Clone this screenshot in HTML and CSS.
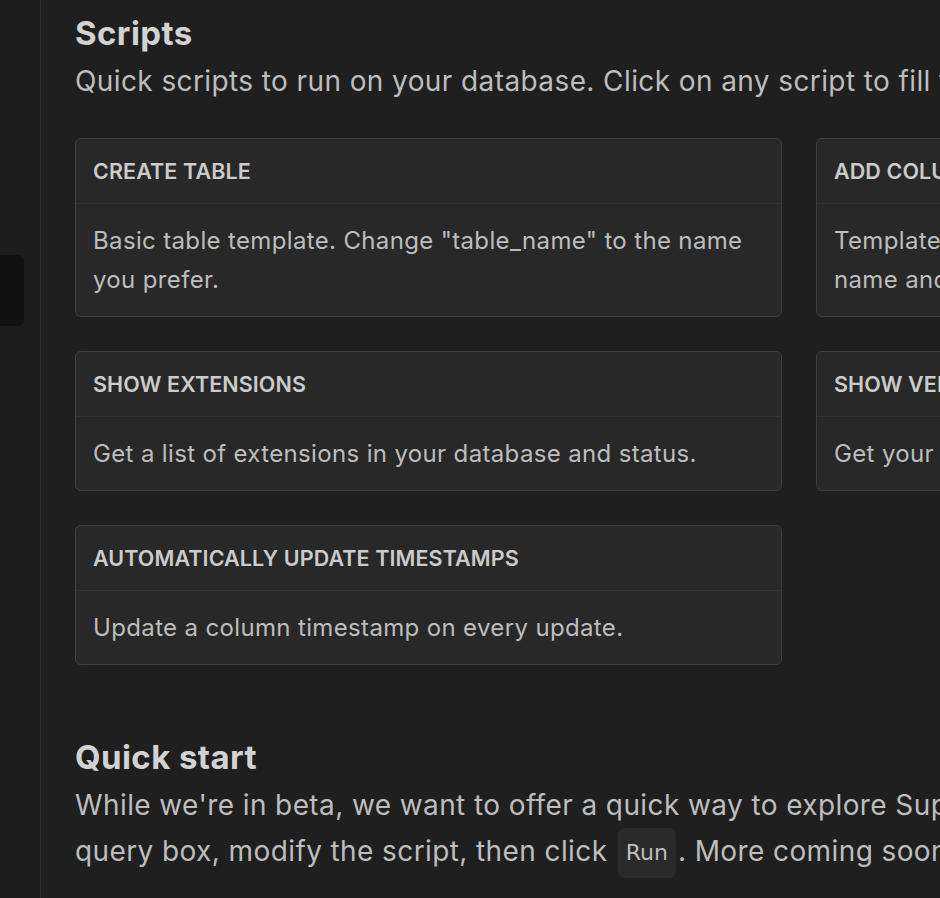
FILE: index.html
```html
<!DOCTYPE html>
<html lang="en">
<head>
<meta charset="utf-8">
<title>Scripts</title>
<link rel="stylesheet" href="styles.css">
</head>
<body>
<div class="app">
  <aside class="sidebar">
    <div class="side-item"></div>
  </aside>
  <main class="main">
    <section class="section">
      <h2 class="section-title">Scripts</h2>
      <p class="section-desc">Quick scripts to run on your database. Click on any script to fill the query box, modify the script, then click Run.</p>
      <div class="grid">
        <div class="card">
          <div class="card-head">CREATE TABLE</div>
          <div class="card-body">Basic table template. Change "table_name" to the name you prefer.</div>
        </div>
        <div class="card">
          <div class="card-head">ADD COLUMN</div>
          <div class="card-body">Template to add a column to a table. Change the column name and type as you prefer.</div>
        </div>
        <div class="card">
          <div class="card-head">SHOW EXTENSIONS</div>
          <div class="card-body">Get a list of extensions in your database and status.</div>
        </div>
        <div class="card">
          <div class="card-head">SHOW VERSION</div>
          <div class="card-body">Get your Postgres version.</div>
        </div>
        <div class="card">
          <div class="card-head">AUTOMATICALLY UPDATE TIMESTAMPS</div>
          <div class="card-body">Update a column timestamp on every update.</div>
        </div>
      </div>
    </section>
    <section class="section quick">
      <h2 class="section-title">Quick start</h2>
      <p class="section-desc">While we're in beta, we want to offer a quick way to explore Supabase. Click on any script to fill the<br>query box, modify the script, then click <code class="kbd">Run</code>. More coming soon!</p>
    </section>
  </main>
</div>
</body>
</html>
```
FILE: styles.css
```css
* { box-sizing: border-box; }
html, body {
  margin: 0;
  padding: 0;
  background: #1f1f1f;
  overflow: hidden;
  height: 100%;
}
body {
  font-family: "Inter", "Noto Sans", sans-serif;
  color: #bbbbbb;
}
.app {
  display: flex;
  min-height: 100%;
}
.sidebar {
  flex: 0 0 41px;
  background: #1c1c1c;
  border-right: 1px solid #2e2e2e;
  padding-top: 255px;
}
.side-item {
  width: 24px;
  height: 71px;
  background: #111111;
  border-radius: 0 7px 7px 0;
}
.main {
  flex: 0 0 auto;
  width: 1500px;
  padding: 12px 0 0 34px;
}
.section-title {
  margin: 0;
  font-size: 33px;
  line-height: 42px;
  font-weight: 700;
  letter-spacing: 0.4px;
  color: #d2d2d2;
}
.section-desc {
  margin: 4px 0 0;
  font-size: 28px;
  line-height: 46px;
  letter-spacing: 0.4px;
  color: #bdbdbd;
  white-space: nowrap;
}
.grid {
  display: grid;
  grid-template-columns: 707px 707px;
  column-gap: 34px;
  row-gap: 34px;
  margin-top: 34px;
  align-items: start;
}
.card {
  background: #282828;
  border: 1px solid #404040;
  border-radius: 6px;
}
.card-head {
  padding: 17px 17px 17px;
  font-size: 21.5px;
  line-height: 30px;
  font-weight: 600;
  letter-spacing: 0.1px;
  color: #cbcbcb;
  border-bottom: 1px solid #333333;
}
.card-body {
  padding: 17px;
  font-size: 24px;
  line-height: 39px;
  letter-spacing: 0.35px;
  color: #bdbdbd;
}
.quick {
  margin-top: 71px;
}
.kbd {
  display: inline-block;
  font-family: "DejaVu Sans", sans-serif;
  font-size: 22px;
  line-height: 30px;
  padding: 10px 8px;
  margin: 0 2px;
  vertical-align: middle;
  background: #2a2a2a;
  border-radius: 7px;
  color: #bdbdbd;
  letter-spacing: 0;
}
```
